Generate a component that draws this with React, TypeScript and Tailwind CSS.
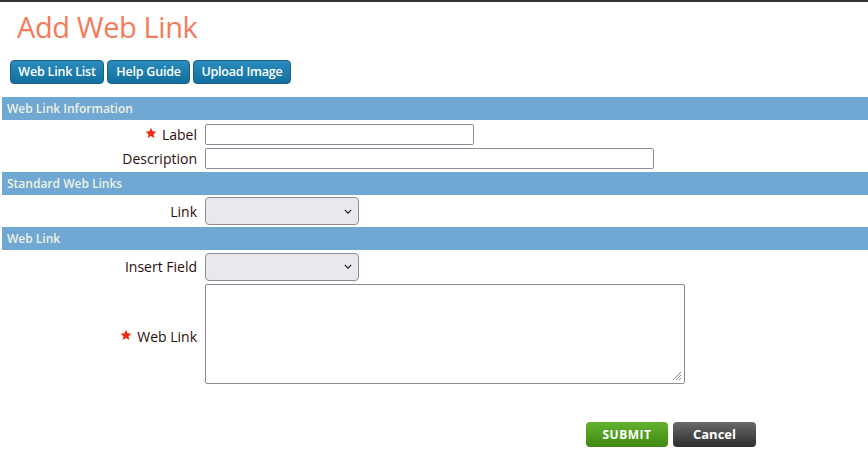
import React from "react";

const font = { fontFamily: '"Open Sans", "DejaVu Sans", sans-serif' };

function SectionBar({ title }: { title: string }) {
  return (
    <div className="h-[23px] bg-[#6fa8d2] pl-[5px] flex items-center text-[12px] font-semibold text-[#eef1e4]">
      {title}
    </div>
  );
}

function Star() {
  return (
    <svg viewBox="0 0 24 24" className="w-[12px] h-[12px] mr-[5px] mb-[3px]" fill="#f02a10">
      <path d="M12 1.5l3.1 7.1 7.7.7-5.8 5.1 1.7 7.6L12 18l-6.7 4 1.7-7.6-5.8-5.1 7.7-.7z" />
    </svg>
  );
}

function FieldLabel({ text, required }: { text: string; required?: boolean }) {
  return (
    <div className="w-[195px] flex items-center justify-end text-[14px] text-[#2b0d0d]">
      {required && <Star />}
      {text}
    </div>
  );
}

function Select() {
  return (
    <div className="w-[154px] h-[28px] rounded-[4px] border border-[#8e8b96] bg-[#e9e8ed] flex items-center justify-end pr-[6px]">
      <svg viewBox="0 0 10 6" className="w-[8px] h-[5px]" fill="none" stroke="#222" strokeWidth="1.6">
        <path d="M1 1l4 4 4-4" />
      </svg>
    </div>
  );
}

function TopButton({ text, width }: { text: string; width: string }) {
  return (
    <button
      className={`${width} h-[24px] pt-[1px] rounded-[4px] border border-[#1a5f86] bg-gradient-to-b from-[#2a8bbd] to-[#10709f] text-white text-[12.5px] font-semibold leading-none tracking-[-0.2px]`}
    >
      {text}
    </button>
  );
}

export default function App() {
  return (
    <div className="w-[868px] h-[470px] bg-white border-t-2 border-[#363636] overflow-hidden" style={font}>
      <div className="pl-[17px] pt-[7px] h-[56px] text-[29px] text-[#f57b5a] leading-[36px] tracking-[-0.4px]">
        Add Web Link
      </div>
      <div className="flex gap-[3px] pl-[10px] h-[24px] mt-[2px]">
        <TopButton text="Web Link List" width="w-[94px]" />
        <TopButton text="Help Guide" width="w-[83px]" />
        <TopButton text="Upload Image" width="w-[98px]" />
      </div>
      <div className="ml-[2px] mt-[13px]">
        <SectionBar title="Web Link Information" />
        <div className="flex flex-col gap-[4px] pt-[4px] pb-[4px]">
          <div className="flex items-center gap-[8px] h-[20px]">
            <FieldLabel text="Label" required />
            <input className="w-[269px] h-[21px] border border-[#8e8b96] rounded-[2px] outline-none" />
          </div>
          <div className="flex items-center gap-[8px] h-[20px]">
            <FieldLabel text="Description" />
            <input className="w-[449px] h-[21px] border border-[#8e8b96] rounded-[2px] outline-none" />
          </div>
        </div>
        <SectionBar title="Standard Web Links" />
        <div className="flex items-center gap-[8px] h-[32px]">
          <FieldLabel text="Link" />
          <Select />
        </div>
        <SectionBar title="Web Link" />
        <div className="flex items-center gap-[8px] h-[33px]">
          <FieldLabel text="Insert Field" />
          <Select />
        </div>
        <div className="flex items-center gap-[8px] mt-[1px]">
          <div className="pt-[4px]">
            <FieldLabel text="Web Link" required />
          </div>
          <div className="relative w-[480px] h-[100px] border border-[#8e8b96] rounded-[2px]">
            <svg viewBox="0 0 12 12" className="absolute right-[2px] bottom-[2px] w-[12px] h-[12px]" stroke="#888" strokeWidth="1">
              <path d="M11 3L3 11M11 6L6 11M11 9L9 11" />
            </svg>
          </div>
        </div>
        <div className="flex gap-[5px] pl-[584px] mt-[38px]">
          <button className="w-[82px] h-[25px] rounded-[4px] bg-gradient-to-b from-[#64b12e] to-[#3f8a10] text-white text-[12px] font-bold tracking-[0.5px]">
            SUBMIT
          </button>
          <button className="w-[83px] h-[25px] rounded-[4px] bg-gradient-to-b from-[#6a6a6a] to-[#2e2e2e] text-white text-[13px] font-bold">
            Cancel
          </button>
        </div>
      </div>
    </div>
  );
}
